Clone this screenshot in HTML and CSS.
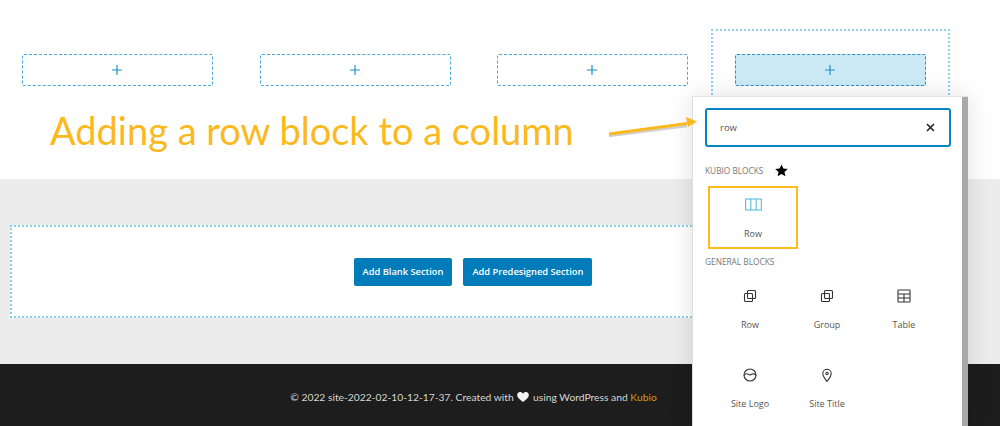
FILE: index.html
```html
<!DOCTYPE html>
<html lang="en">
<head>
<meta charset="utf-8">
<title>Adding a row block to a column</title>
<link rel="stylesheet" href="styles.css">
</head>
<body>
<main class="page">
  <section class="top">
    <div class="columns">
      <div class="placeholder"><svg class="plus" viewBox="0 0 11 11"><path d="M5.5 0v11M0 5.5h11"/></svg></div>
      <div class="placeholder"><svg class="plus" viewBox="0 0 11 11"><path d="M5.5 0v11M0 5.5h11"/></svg></div>
      <div class="placeholder"><svg class="plus" viewBox="0 0 11 11"><path d="M5.5 0v11M0 5.5h11"/></svg></div>
      <div class="placeholder selected"><svg class="plus" viewBox="0 0 11 11"><path d="M5.5 0v11M0 5.5h11"/></svg></div>
    </div>
    <h1 class="caption">Adding a row block to a column</h1>
  </section>
  <section class="middle">
    <div class="add-section">
      <button class="btn">Add Blank Section</button>
      <button class="btn">Add Predesigned Section</button>
    </div>
  </section>
  <footer class="footer">
    <p>© 2022 site-2022-02-10-12-17-37. Created with <svg class="heart" viewBox="0 0 14 12"><path d="M7 12C3 9 0 7 0 3.6 0 1.5 1.6 0 3.5 0 5 0 6.300.8 7 2c.7-1.200 2-2 3.500-2C12.400 0 14 1.500 14 3.600 14 7 11 9 7 12z"/></svg> using WordPress and <a class="kubio" href="#">Kubio</a></p>
  </footer>
</main>

<aside class="inserter">
  <div class="panel">
    <div class="search"><span>row</span><svg class="close" viewBox="0 0 9 9"><path d="M1 1l7 7M8 1 1 8"/></svg></div>
    <div class="heading"><span>KUBIO BLOCKS</span><svg class="star" viewBox="0 0 14 14"><path d="M7 .5l2 4.400 4.800.5-3.600 3.200 1 4.700L7 10.900l-4.200 2.400 1-4.700L.2 5.400 5 4.900z"/></svg></div>
    <div class="kubio-grid">
      <div class="block featured">
        <svg class="icon" viewBox="0 0 18 13"><path class="blue" d="M.7.7h16.600v11.600H.7zM6.200.7v11.600M11.800.7v11.600"/></svg>
        <span>Row</span>
      </div>
    </div>
    <div class="heading general"><span>GENERAL BLOCKS</span></div>
    <div class="block-grid">
      <div class="block">
        <svg class="icon" viewBox="0 0 14 14"><rect x="1.500" y="4.500" width="8" height="8" rx="1"/><rect x="4.500" y="1.500" width="8" height="8" rx="1"/></svg>
        <span>Row</span>
      </div>
      <div class="block">
        <svg class="icon" viewBox="0 0 14 14"><rect x="1.500" y="4.500" width="8" height="8" rx="1"/><rect x="4.500" y="1.500" width="8" height="8" rx="1"/></svg>
        <span>Group</span>
      </div>
      <div class="block">
        <svg class="icon" viewBox="0 0 14 14"><path d="M1.500 1h11a.5.5 0 0 1 .5.500v11a.5.5 0 0 1-.5.500h-11a.5.500 0 0 1-.5-.500v-11A.5.500 0 0 1 1.500 1zM1 5h12M1 9h12M7 5v8"/></svg>
        <span>Table</span>
      </div>
      <div class="block">
        <svg class="icon" viewBox="0 0 14 14"><circle cx="7" cy="7" r="6"/><path d="M1 7.500c1.500-2 3-2 4.300-1.200s2.400.8 3.400 0 3-.8 4.300 1.200"/></svg>
        <span>Site Logo</span>
      </div>
      <div class="block">
        <svg class="icon" viewBox="0 0 14 14"><path d="M7 13.500C5 11 2.800 8.400 2.800 5.500a4.200 4.200 0 0 1 8.400 0c0 2.900-2.200 5.500-4.200 8z"/><circle cx="7" cy="5.500" r="1.200"/></svg>
        <span>Site Title</span>
      </div>
    </div>
  </div>
  <div class="scrollbar"></div>
</aside>

<svg class="arrow" viewBox="0 0 96 26"><path class="arrow-shadow" d="M2 21 80 11"/><path class="arrow-line" d="M2 19 80 8.500"/><path class="arrow-head" d="M79 2 90 6.500 81 12z"/></svg>
</body>
</html>
```
FILE: styles.css
```css
* { box-sizing: border-box; }
html, body { margin: 0; height: 426px; overflow: hidden; background: #fff; }
body { font-family: "Open Sans", "Noto Sans", sans-serif; position: relative; }
.page { display: flex; flex-direction: column; height: 426px; }

.top { height: 179px; padding: 54px 0 0 22px; }
.columns { display: flex; gap: 46.500px; }
.placeholder {
  position: relative; width: 191px; height: 32px;
  border: 1px dashed #45a9de; border-radius: 2px;
  display: flex; align-items: center; justify-content: center;
}
.placeholder.selected { background: #cbeaf6; border-color: #2a8fc6; }
.placeholder.selected::before {
  content: ""; position: absolute; inset: -26px -25px -30px -25px;
  border: 2px dotted #8fd2ef;
}
.plus { width: 10px; height: 10px; margin-right: 1px; fill: none; stroke: #1f8fca; stroke-width: 1.300; }

.caption {
  margin: 22px 0 0 28px; font-family: "Lato", "Open Sans", sans-serif;
  font-size: 38px; line-height: 44px; font-weight: 400; color: #fbb91e;
}

.middle { height: 185px; background: #ececec; padding: 46px 0 0 10px; }
.add-section {
  width: 926px; height: 93px; background: #fff;
  border: 2px dotted #7fd3ec;
  display: flex; justify-content: center; align-items: center; gap: 11px;
}
.btn {
  height: 28px; padding: 0 9px; border: 0; border-radius: 2px;
  background: #007cba; color: #fff;
  font-family: inherit; font-size: 9.300px; font-weight: 600; white-space: nowrap;
}

.footer {
  flex: 1; background: #1d1d1d; color: #d6d6d6;
  display: flex; align-items: center; justify-content: center;
  padding: 4px 0 0 0; font-family: "Lato", sans-serif; font-size: 10.300px;
}
.footer p { margin: 0 0 0 -53px; }
.heart { width: 12px; height: 10px; fill: #f2f2f2; margin: 0 1px; vertical-align: -1px; }
.kubio { color: #c9a010; text-decoration: none; }

.arrow {
  position: absolute; left: 607px; top: 115px; width: 96px; height: 26px;
  fill: none;
}
.arrow-line { stroke: #f9b91f; stroke-width: 3; }
.arrow-shadow { stroke: #999; stroke-opacity: .45; stroke-width: 2.500; }
.arrow-head { fill: #f9b91f; }

.inserter {
  position: absolute; left: 692px; top: 96px; width: 276px; height: 330px;
  background: #fff; display: flex;
  border-left: 1px solid #ddd; border-top: 1px solid #e2e2e2;
  box-shadow: 0 0 24px rgba(0,0,0,.12);
}
.panel { flex: 1; min-width: 0; padding: 11px 11px 0 12px; }
.scrollbar { width: 6px; flex-shrink: 0; background: #a9a9a9; }
.search {
  height: 39px; border: 2px solid #0a84c4; border-radius: 3px;
  display: flex; align-items: center; justify-content: space-between;
  padding: 0 14px 0 13px; font-size: 9.500px; color: #555;
}
.close { width: 9px; height: 9px; fill: none; stroke: #222; stroke-width: 1.600; }
.heading {
  display: flex; align-items: center; gap: 12px; height: 14px; margin-top: 16px;
  font-size: 8.300px; color: #777; font-weight: 500;
}
.heading.general { margin-top: 5px; }
.star { width: 13px; height: 13px; fill: #000; }
.kubio-grid { display: flex; padding: 9px 0 0 3px; }
.block {
  width: 77px; height: 79px; display: flex; flex-direction: column; align-items: center;
  font-size: 9px; color: #555;
}
.block span { margin-top: 15px; line-height: 14px; }
.icon { width: 14px; height: 14px; margin-top: 16px; fill: none; stroke: #333; stroke-width: 1.100; }
.block.featured { width: 90px; height: 63px; border: 2px solid #fdbb1d; }
.block.featured .icon { width: 17px; height: 13px; margin-top: 10px; }
.block.featured span { margin-top: 16px; }
.blue { stroke: #4bb7e3; }
.block-grid {
  display: grid; grid-template-columns: repeat(3, 77px); grid-auto-rows: 79px;
  padding: 5px 0 0 6.500px;
}
```
